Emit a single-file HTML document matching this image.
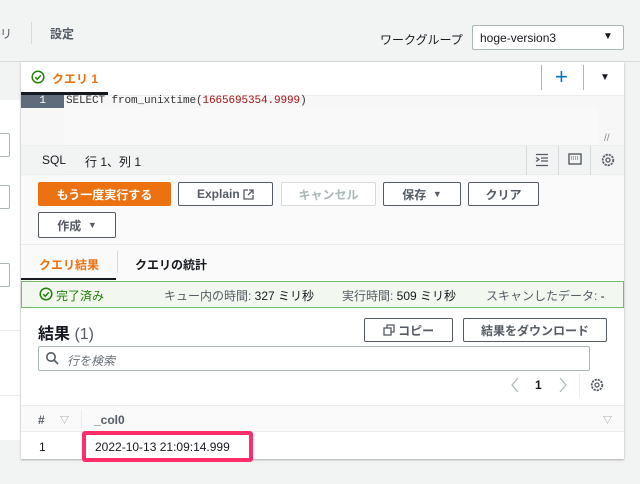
<!DOCTYPE html>
<html><head><meta charset="utf-8"><style>
*{box-sizing:border-box;margin:0;padding:0}
body{width:640px;height:484px;background:#f2f3f3;font-family:"Liberation Sans","Noto Sans CJK JP",sans-serif;font-size:12px;color:#16191f;position:relative;overflow:hidden}
.a{position:absolute}
.btn{position:absolute;height:24px;border:1px solid #545b64;border-radius:2px;background:#fff;font-weight:bold;font-size:12px;display:flex;align-items:center;justify-content:center;color:#545b64}
.t{white-space:nowrap}
</style></head><body>
<div class="a t" style="left:0;top:25px;font-size:12px;color:#545b64">リ</div>
<div class="a" style="left:31px;top:22px;width:1px;height:22px;background:#d5dbdb"></div>
<div class="a t" style="left:50px;top:25px;color:#545b64;font-weight:bold">設定</div>
<div class="a t" style="left:380px;top:31px;color:#16191f">ワークグループ</div>
<div class="a" style="left:472px;top:25px;width:152px;height:25px;background:#fff;border:1px solid #aab7b8;border-radius:2px"></div>
<div class="a t" style="left:480px;top:31px">hoge-version3</div>
<div class="a t" style="left:603px;top:31px;font-size:10px">▼</div>
<div class="a" style="left:0;top:61px;width:640px;height:1px;background:#d5dbdb"></div>

<!-- left panel -->
<div class="a" style="left:0;top:100px;width:20px;height:340px;background:#fff"></div>
<div class="a" style="left:-4px;top:133px;width:14px;height:24px;border:1px solid #aab7b8;border-radius:2px"></div>
<div class="a" style="left:-4px;top:185px;width:14px;height:24px;border:1px solid #aab7b8;border-radius:2px"></div>
<div class="a" style="left:-4px;top:263px;width:14px;height:24px;border:1px solid #aab7b8;border-radius:2px"></div>
<div class="a" style="left:0;top:330px;width:20px;height:1px;background:#eaeded"></div>
<div class="a" style="left:0;top:395px;width:20px;height:1px;background:#eaeded"></div>

<!-- main panel -->
<div class="a" style="left:21px;top:62px;width:603px;height:397px;background:#fff;box-shadow:0 1px 2px rgba(0,0,0,.3)"></div>
<svg class="a" style="left:31px;top:70px" width="14" height="14" viewBox="0 0 14 14"><circle cx="7" cy="7" r="5.8" fill="none" stroke="#1d8102" stroke-width="1.5"/><path d="M4.3 7.2l2 2 3.5-3.8" fill="none" stroke="#1d8102" stroke-width="1.5"/></svg>
<div class="a t" style="left:52px;top:70px;color:#ec7211;font-weight:bold">クエリ 1</div>
<div class="a" style="left:21px;top:92px;width:87px;height:3px;background:#16191f"></div>
<div class="a" style="left:541px;top:65px;width:1px;height:25px;background:#aab7b8"></div>
<div class="a t" style="left:555px;top:64px;font-size:22px;color:#0073bb">+</div>
<div class="a" style="left:583px;top:65px;width:1px;height:25px;background:#aab7b8"></div>
<div class="a t" style="left:600px;top:72px;font-size:10px">▼</div>
<!-- editor -->
<div class="a" style="left:21px;top:95px;width:603px;height:83px;background:#f7f7f7;border-top:1px solid #eaeded"></div>
<div class="a" style="left:21px;top:95px;width:43px;height:13px;background:#5f6b7a;color:#fff;font-family:'Liberation Mono',monospace;font-size:11px;text-align:right;padding-right:18px;line-height:13px">1</div>
<div class="a" style="left:64px;top:108px;width:534px;height:70px;background:#f9f9f9"></div>
<div class="a t" style="left:66px;top:94px;font-family:'Liberation Mono',monospace;font-size:11px;line-height:15px;letter-spacing:-0.1px;color:#333">SELECT from_unixtime(<span style="color:#a31515">1665695354.9999</span>)</div>
<div class="a t" style="left:604px;top:133px;color:#888;font-size:10px">//</div>
<div class="a" style="left:21px;top:145px;width:603px;height:30px;background:#f2f3f3;border-top:1px solid #eaeded;border-bottom:1px solid #eaeded"></div>
<div class="a t" style="left:42px;top:153px">SQL</div>
<div class="a t" style="left:85px;top:153px">行 1、列 1</div>
<div class="a" style="left:526px;top:146px;width:1px;height:29px;background:#d5dbdb"></div>
<div class="a" style="left:558px;top:146px;width:1px;height:29px;background:#d5dbdb"></div>
<div class="a" style="left:590px;top:146px;width:1px;height:29px;background:#d5dbdb"></div>
<svg class="a" style="left:535px;top:153px" width="14" height="14" viewBox="0 0 14 14" fill="none" stroke="#545b64" stroke-width="1.3"><path d="M1 1.5h12M6 5h7M6 8h7M1 12.5h12M1 4.5l3 2-3 2"/></svg>
<svg class="a" style="left:568px;top:153px" width="14" height="13" viewBox="0 0 14 13"><rect x="1" y="1" width="12" height="10" fill="none" stroke="#545b64" stroke-width="1.4"/><path d="M3 4h8M3 6h8" stroke="#545b64" stroke-width="1" stroke-dasharray="1 1"/></svg>
<svg class="a" style="left:601px;top:153px" width="14" height="14" viewBox="0 0 14 14"><circle cx="7" cy="7" r="5.3" fill="none" stroke="#545b64" stroke-width="1.8" stroke-dasharray="2.2 1"/><circle cx="7" cy="7" r="2" fill="none" stroke="#545b64" stroke-width="1.3"/></svg>
<!-- buttons -->
<div class="a" style="left:21px;top:176px;width:603px;height:68px;background:#fafafa"></div>
<div class="btn" style="left:38px;top:182px;width:133px;background:#ec7211;border-color:#ec7211;color:#fff">もう一度実行する</div>
<div class="btn" style="left:178px;top:182px;width:95px">Explain&nbsp;<svg width="11" height="11" viewBox="0 0 11 11" fill="none" stroke="#545b64" stroke-width="1.3"><path d="M5 1H1v9h9V6M6 1h4v4M10 1L5 6"/></svg></div>
<div class="btn" style="left:281px;top:182px;width:95px;border-color:#d5dbdb;color:#aab7b8">キャンセル</div>
<div class="btn" style="left:383px;top:182px;width:78px">保存&nbsp;&nbsp;<span style="font-size:9px">▼</span></div>
<div class="btn" style="left:468px;top:182px;width:71px">クリア</div>
<div class="btn" style="left:38px;top:212px;width:78px;height:26px">作成&nbsp;&nbsp;<span style="font-size:9px">▼</span></div>
<!-- result tabs -->
<div class="a" style="left:21px;top:244px;width:603px;height:36px;background:#fafafa;border-top:1px solid #eaeded"></div>
<div class="a t" style="left:39px;top:256px;color:#ec7211;font-weight:bold">クエリ結果</div>
<div class="a" style="left:117px;top:251px;width:1px;height:22px;background:#d5dbdb"></div>
<div class="a t" style="left:135px;top:256px;font-weight:bold;color:#16191f">クエリの統計</div>
<div class="a" style="left:21px;top:278px;width:95px;height:2px;background:#16191f"></div>
<div class="a" style="left:21px;top:281px;width:603px;height:27px;background:#f2f8f0;border:1px solid #7ab86a"></div>
<svg class="a" style="left:39px;top:287px" width="14" height="14" viewBox="0 0 14 14"><circle cx="7" cy="7" r="5.8" fill="none" stroke="#1d8102" stroke-width="1.5"/><path d="M4.3 7.2l2 2 3.5-3.8" fill="none" stroke="#1d8102" stroke-width="1.5"/></svg>
<div class="a t" style="left:56px;top:287px;color:#1d8102">完了済み</div>
<div class="a t" style="left:164px;top:287px;color:#545b64">キュー内の時間: <span style="color:#16191f">327 ミリ秒</span></div>
<div class="a t" style="left:342px;top:287px;color:#545b64">実行時間: <span style="color:#16191f">509 ミリ秒</span></div>
<div class="a t" style="left:486px;top:287px;color:#545b64">スキャンしたデータ: <span style="color:#16191f">-</span></div>
<!-- results -->
<div class="a t" style="left:38px;top:320px;font-size:16px;font-weight:bold">結果 <span style="font-weight:normal;color:#545b64">(1)</span></div>
<div class="btn" style="left:364px;top:318px;width:89px">
<svg width="12" height="12" viewBox="0 0 12 12" fill="none" stroke="#545b64" stroke-width="1.3"><rect x="1" y="4" width="7" height="7"/><path d="M4 4V1h7v7H8"/></svg>&nbsp;コピー</div>
<div class="btn" style="left:463px;top:318px;width:144px">結果をダウンロード</div>
<div class="a" style="left:38px;top:346px;width:552px;height:25px;border:1px solid #aab7b8;border-radius:2px;background:#fff"></div>
<svg class="a" style="left:45px;top:351px" width="14" height="14" viewBox="0 0 14 14" fill="none" stroke="#545b64" stroke-width="1.6"><circle cx="6" cy="6" r="4.2"/><path d="M9 9l4 4"/></svg>
<div class="a t" style="left:67px;top:352px;color:#687078;font-style:italic">行を検索</div>
<svg class="a" style="left:510px;top:377px" width="10" height="16" viewBox="0 0 10 16" fill="none" stroke="#aab7b8" stroke-width="1.2"><path d="M8 1L2 8l6 7"/></svg>
<div class="a t" style="left:535px;top:378px;font-weight:bold">1</div>
<svg class="a" style="left:558px;top:377px" width="10" height="16" viewBox="0 0 10 16" fill="none" stroke="#aab7b8" stroke-width="1.2"><path d="M2 1l6 7-6 7"/></svg>
<div class="a" style="left:579px;top:373px;width:1px;height:24px;background:#eaeded"></div>
<svg class="a" style="left:590px;top:378px" width="14" height="14" viewBox="0 0 14 14"><circle cx="7" cy="7" r="5.3" fill="none" stroke="#545b64" stroke-width="1.8" stroke-dasharray="2.2 1"/><circle cx="7" cy="7" r="2" fill="none" stroke="#545b64" stroke-width="1.3"/></svg>
<div class="a" style="left:21px;top:405px;width:603px;height:1px;background:#eaeded"></div>
<div class="a" style="left:21px;top:406px;width:603px;height:26px;background:#fafafa;border-bottom:1px solid #eaeded"></div>
<div class="a t" style="left:38px;top:413px;font-weight:bold;color:#545b64">#</div>
<div class="a t" style="left:60px;top:413px;font-size:9px;color:#879596">▽</div>
<div class="a" style="left:81px;top:410px;width:1px;height:18px;background:#eaeded"></div>
<div class="a t" style="left:94px;top:413px;font-weight:bold;color:#545b64">_col0</div>
<div class="a t" style="left:603px;top:413px;font-size:9px;color:#879596">▽</div>
<div class="a t" style="left:39px;top:440px">1</div>
<div class="a" style="left:82px;top:431px;width:171px;height:31px;border:4px solid #ff2d6a;border-radius:3px"></div>
<div class="a t" style="left:95px;top:440px">2022-10-13 21:09:14.999</div>
</body></html>
